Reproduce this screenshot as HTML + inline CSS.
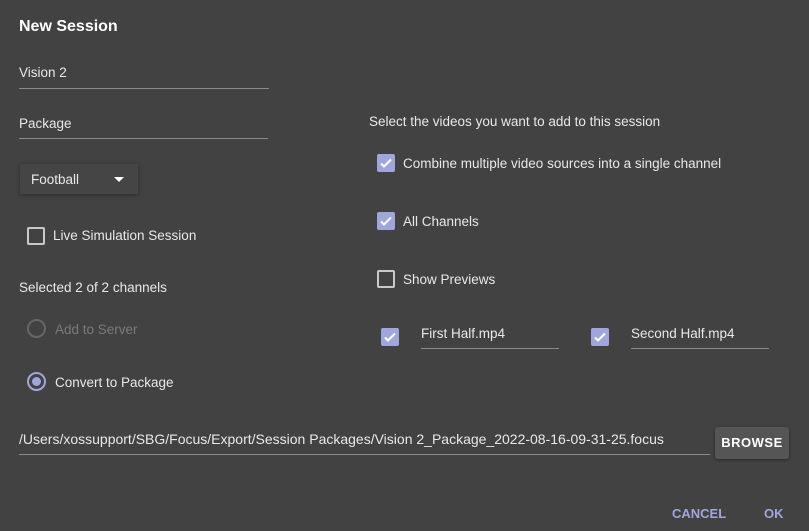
<!DOCTYPE html>
<html><head><style>
body{margin:0;width:809px;height:531px;background:#424242;font-family:"Liberation Sans",sans-serif;color:#e8e8e8;position:relative;overflow:hidden;font-size:13.5px}
.a{position:absolute;white-space:nowrap}
.line{position:absolute;height:1px;background:#8a8a8a}
.cb{position:absolute;width:15px;height:15px;border-radius:2px;box-sizing:border-box}
.on{background:#9fa6dc}
.off{border:2px solid #c8c8c8}
.cb svg{position:absolute;left:1px;top:1px}
</style></head><body>
<div class="a" style="left:19px;top:18px;font-size:16px;font-weight:bold;color:#fff">New Session</div>
<div class="a" style="left:19px;top:65px">Vision 2</div>
<div class="line" style="left:19px;top:88px;width:250px"></div>
<div class="a" style="left:19px;top:116px">Package</div>
<div class="line" style="left:19px;top:138px;width:249px"></div>
<div class="a" style="left:20px;top:164px;width:118px;height:30px;background:#454545;box-shadow:0 1px 4px rgba(0,0,0,.35)"></div>
<div class="a" style="left:31px;top:172px">Football</div>
<div class="a" style="left:114px;top:177px;width:0;height:0;border-left:5px solid transparent;border-right:5px solid transparent;border-top:5px solid #fff"></div>
<div class="cb off" style="left:27px;top:227px;width:18px;height:18px"></div>
<div class="a" style="left:53px;top:228px">Live Simulation Session</div>
<div class="a" style="left:19px;top:280px">Selected 2 of 2 channels</div>
<div class="a" style="left:27px;top:319px;width:19px;height:19px;border:2px solid #666;border-radius:50%;box-sizing:border-box"></div>
<div class="a" style="left:55px;top:322px;color:#7a7a7a">Add to Server</div>
<div class="a" style="left:27px;top:372px;width:19px;height:19px;border:2px solid #9fa6dc;border-radius:50%;box-sizing:border-box"></div>
<div class="a" style="left:32px;top:377px;width:9px;height:9px;background:#9fa6dc;border-radius:50%"></div>
<div class="a" style="left:55px;top:375px">Convert to Package</div>

<div class="a" style="left:369px;top:114px">Select the videos you want to add to this session</div>
<div class="cb on" style="left:377px;top:154px;width:18px;height:18px"><svg width="16" height="16" viewBox="0 0 16 16"><path d="M3 8.5l3 3 7-7" stroke="#fff" stroke-width="2" fill="none"/></svg></div>
<div class="a" style="left:403px;top:156px">Combine multiple video sources into a single channel</div>
<div class="cb on" style="left:377px;top:212px;width:18px;height:18px"><svg width="16" height="16" viewBox="0 0 16 16"><path d="M3 8.5l3 3 7-7" stroke="#fff" stroke-width="2" fill="none"/></svg></div>
<div class="a" style="left:403px;top:214px">All Channels</div>
<div class="cb off" style="left:377px;top:270px;width:18px;height:18px"></div>
<div class="a" style="left:403px;top:272px">Show Previews</div>
<div class="cb on" style="left:381px;top:328px;width:18px;height:18px"><svg width="16" height="16" viewBox="0 0 16 16"><path d="M3 8.5l3 3 7-7" stroke="#fff" stroke-width="2" fill="none"/></svg></div>
<div class="a" style="left:421px;top:326px">First Half.mp4</div>
<div class="line" style="left:421px;top:348px;width:138px"></div>
<div class="cb on" style="left:591px;top:328px;width:18px;height:18px"><svg width="16" height="16" viewBox="0 0 16 16"><path d="M3 8.5l3 3 7-7" stroke="#fff" stroke-width="2" fill="none"/></svg></div>
<div class="a" style="left:631px;top:326px">Second Half.mp4</div>
<div class="line" style="left:631px;top:348px;width:138px"></div>

<div class="a" style="left:19px;top:431px;font-size:14px">/Users/xossupport/SBG/Focus/Export/Session Packages/Vision 2_Package_2022-08-16-09-31-25.focus</div>
<div class="line" style="left:19px;top:454px;width:691px"></div>
<div class="a" style="left:715px;top:427px;width:74px;height:32px;background:#555;border-radius:3px;box-shadow:0 1px 3px rgba(0,0,0,.4);font-weight:bold;text-align:center;line-height:32px;color:#fff;letter-spacing:.5px;font-size:13px">BROWSE</div>
<div class="a" style="left:672px;top:506px;font-weight:bold;color:#9fa6dc;font-size:13px">CANCEL</div>
<div class="a" style="left:764px;top:506px;font-weight:bold;color:#9fa6dc;font-size:13px">OK</div>
</body></html>
